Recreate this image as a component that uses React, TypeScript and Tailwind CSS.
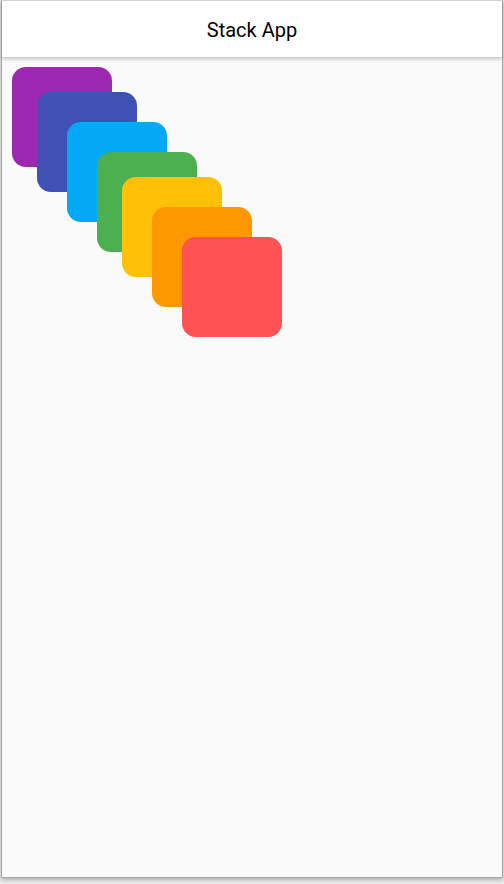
import React from "react";

const boxes = [
  { c: "bg-[#9c27b0]", pos: "left-[10px] top-[10px]" },
  { c: "bg-[#3f51b5]", pos: "left-[35px] top-[35px]" },
  { c: "bg-[#03a9f4]", pos: "left-[65px] top-[65px]" },
  { c: "bg-[#4caf50]", pos: "left-[95px] top-[95px]" },
  { c: "bg-[#ffc107]", pos: "left-[120px] top-[120px]" },
  { c: "bg-[#ff9800]", pos: "left-[150px] top-[150px]" },
  { c: "bg-[#ff5252]", pos: "left-[180px] top-[180px]" },
];

export default function App() {
  return (
    <div className="w-[504px] h-[884px] bg-[#ececec] overflow-hidden" style={{ fontFamily: "Roboto, 'Liberation Sans', sans-serif" }}>
      <div className="ml-[1px] w-[502px] h-[878px] border border-[#a8a8a8] border-t-[#d8d8d8] bg-[#fafafa] flex flex-col shadow-[0_2px_4px_rgba(0,0,0,0.25)]">
        <div className="h-[56px] shrink-0 bg-white flex items-center justify-center shadow-[0_2px_4px_rgba(0,0,0,0.22)] relative z-10">
          <span className="text-[20px] text-black pt-[2px]">Stack App</span>
        </div>
        <div className="relative flex-1">
          {boxes.map((b, i) => (
            <div key={i} className={`absolute w-[100px] h-[100px] rounded-[14px] ${b.c} ${b.pos}`} />
          ))}
        </div>
      </div>
    </div>
  );
}
